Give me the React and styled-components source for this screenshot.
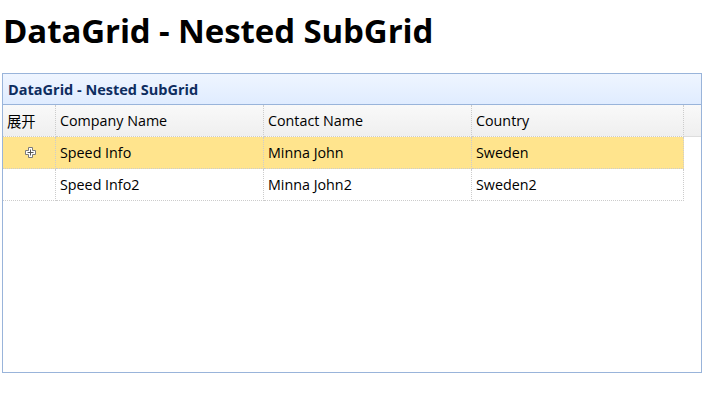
import styled, { createGlobalStyle } from "styled-components";

const GlobalStyle = createGlobalStyle`
  body {
    margin: 0;
    padding: 0 2px;
    background: #fff;
    font-family: "Open Sans", "Noto Sans CJK SC", sans-serif;
  }
`;

const Title = styled.h1`
  margin: 0;
  padding: 9px 0 0 1px;
  height: 73px;
  box-sizing: border-box;
  font-size: 33px;
  line-height: 44px;
  font-weight: 700;
  color: #000;
  letter-spacing: -0.1px;
`;

const Panel = styled.div`
  width: 700px;
  height: 300px;
  border: 1px solid #99b4da;
  display: flex;
  flex-direction: column;
  box-sizing: border-box;
`;

const PanelHeader = styled.div`
  height: 30px;
  display: flex;
  align-items: center;
  padding-left: 5px;
  background: linear-gradient(to bottom, #eff5ff 0, #e0ecff 100%);
  border-bottom: 1px solid #99b4da;
  font-size: 14.5px;
  font-weight: 700;
  color: #0e2d5f;
`;

const Grid = styled.div`
  display: grid;
  grid-template-columns: 53px 208px 208px 212px 17px;
`;

const HeaderCell = styled.div`
  height: 32px;
  display: flex;
  align-items: center;
  padding-left: ${(p) => (p.$first ? "4px" : "4px")};
  background: linear-gradient(to bottom, #f9f9f9 0, #efefef 100%);
  border-right: 1px dotted #ccc;
  border-bottom: 1px dotted #ccc;
  font-size: 14.3px;
  color: #000;
  box-sizing: border-box;
`;

const Filler = styled.div`
  height: 32px;
  background: linear-gradient(to bottom, #f9f9f9 0, #efefef 100%);
  border-bottom: 1px solid #ddd;
  box-sizing: border-box;
`;

const Cell = styled.div`
  height: 32px;
  display: flex;
  align-items: center;
  justify-content: ${(p) => (p.$center ? "center" : "flex-start")};
  padding-left: ${(p) => (p.$center ? "2px" : "4px")};
  background: ${(p) => (p.$selected ? "#ffe48d" : "#fff")};
  border-right: 1px dotted #ccc;
  border-bottom: 1px dotted #ccc;
  font-size: 14.3px;
  color: #000;
  box-sizing: border-box;
`;

const Blank = styled.div`
  height: 32px;
`;

function ExpandIcon() {
  return (
    <svg width="11" height="11" viewBox="0 0 11 11">
      <path
        d="M3.5 0.5h4v3h3v4h-3v3h-4v-3h-3v-4h3z"
        fill="#fff"
        stroke="#7a7a7a"
        strokeWidth="1"
      />
      <path d="M5.5 2.5v6M2.5 5.5h6" stroke="#555" strokeWidth="1" />
    </svg>
  );
}

const rows = [
  { company: "Speed Info", contact: "Minna John", country: "Sweden", selected: true, expand: true },
  { company: "Speed Info2", contact: "Minna John2", country: "Sweden2" },
];

export default function App() {
  return (
    <>
      <GlobalStyle />
      <Title>DataGrid - Nested SubGrid</Title>
      <Panel>
        <PanelHeader>DataGrid - Nested SubGrid</PanelHeader>
        <Grid>
          <HeaderCell $first>展开</HeaderCell>
          <HeaderCell>Company Name</HeaderCell>
          <HeaderCell>Contact Name</HeaderCell>
          <HeaderCell>Country</HeaderCell>
          <Filler />
          {rows.map((r) => (
            <>
              <Cell $center $selected={r.selected}>
                {r.expand && <ExpandIcon />}
              </Cell>
              <Cell $selected={r.selected}>{r.company}</Cell>
              <Cell $selected={r.selected}>{r.contact}</Cell>
              <Cell $selected={r.selected}>{r.country}</Cell>
              <Blank />
            </>
          ))}
        </Grid>
      </Panel>
    </>
  );
}
